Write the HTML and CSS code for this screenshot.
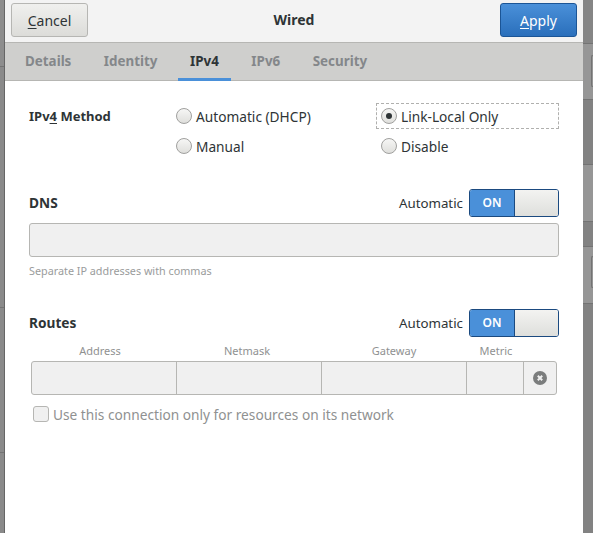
FILE: index.html
```html
<!DOCTYPE html>
<html lang="en">
<head>
    <meta charset="UTF-8">
    <title>Wired</title>
    <link rel="stylesheet" href="styles.css">
</head>
<body>
    <div class="backdrop backdrop-left">
        <div class="band band-l1"></div>
        <div class="band band-l2"></div>
        <div class="band band-l3"></div>
        <div class="band band-l4"></div>
    </div>

    <div class="dialog">
        <div class="header">
            <button type="button" class="btn"><u>C</u>ancel</button>
            <div class="header-title">Wired</div>
            <button type="button" class="btn btn-apply"><u>A</u>pply</button>
        </div>

        <div class="tabs">
            <span class="tab">Details</span>
            <span class="tab">Identity</span>
            <span class="tab tab-active">IPv4</span>
            <span class="tab">IPv6</span>
            <span class="tab">Security</span>
        </div>

        <div class="content">
            <div class="method">
                <div class="section-label method-label">IPv<u>4</u> Method</div>
                <div class="radio-grid">
                    <div class="radio"><span class="radio-dot"></span>Automatic (DHCP)</div>
                    <div class="radio radio-focus"><span class="radio-dot radio-checked"></span>Link-Local Only</div>
                    <div class="radio"><span class="radio-dot"></span>Manual</div>
                    <div class="radio"><span class="radio-dot"></span>Disable</div>
                </div>
            </div>

            <div class="section-head section-dns">
                <div class="section-label">DNS</div>
                <div class="auto">
                    Automatic
                    <div class="switch"><span class="switch-on">ON</span><span class="switch-knob"></span></div>
                </div>
            </div>
            <div class="entry"></div>
            <div class="hint">Separate IP addresses with commas</div>

            <div class="section-head section-routes">
                <div class="section-label">Routes</div>
                <div class="auto">
                    Automatic
                    <div class="switch"><span class="switch-on">ON</span><span class="switch-knob"></span></div>
                </div>
            </div>
            <div class="route-labels">
                <span class="label-address">Address</span>
                <span class="label-netmask">Netmask</span>
                <span class="label-gateway">Gateway</span>
                <span class="label-metric">Metric</span>
            </div>
            <div class="route-row">
                <div class="cell col-wide"></div>
                <div class="cell col-wide"></div>
                <div class="cell col-wide"></div>
                <div class="cell col-metric"></div>
                <div class="cell col-delete">
                    <svg width="14" height="14" viewBox="0 0 14 14">
                        <circle cx="7" cy="7" r="7" fill="#7b7d7d"/>
                        <path d="M4.8 4.8l4.4 4.4M9.2 4.8l-4.4 4.4" stroke="#f0f0f0" stroke-width="2"/>
                    </svg>
                </div>
            </div>
            <div class="check-row"><span class="check"></span>Use this connection only for resources on its network</div>
        </div>
    </div>

    <div class="backdrop backdrop-right">
        <div class="band band-r1"></div>
        <div class="band band-r2"><span class="peek"></span></div>
        <div class="band band-r3"></div>
        <div class="band band-r4"></div>
        <div class="band band-r5"></div>
        <div class="band band-r6"><span class="peek"></span></div>
        <div class="band band-r7"></div>
    </div>
</body>
</html>
```

FILE: styles.css
```css
body {
    margin: 0;
    width: 593px;
    height: 533px;
    overflow: hidden;
    display: flex;
    background-color: #8a8a8a;
    font-family: "Noto Sans", sans-serif;
    font-size: 13.7px;
    color: #2e3436;
}
u {
    text-underline-offset: 2px;
}

/* dimmed window behind the dialog */
.backdrop {
    display: flex;
    flex-direction: column;
}
.backdrop-left {
    width: 4px;
}
.backdrop-right {
    width: 10px;
}
.band {
    box-sizing: border-box;
    border-bottom: 1px solid #737373;
}
.band-l1 { height: 67px; background-color: #8d8d8d; }
.band-l2 { height: 241px; background-color: #8a8a8a; }
.band-l3 { height: 145px; background-color: #8a8a8a; }
.band-l4 { flex: 1; background-color: #8a8a8a; border-bottom: 0; }
.band-r1 { height: 44px; background-color: #858585; }
.band-r2 { height: 56px; background-color: #969696; padding-top: 11px; }
.band-r3 { height: 65px; background-color: #828282; }
.band-r4 { height: 57px; background-color: #969696; }
.band-r5 { height: 25px; background-color: #828282; }
.band-r6 { height: 57px; background-color: #969696; padding-top: 9px; }
.band-r7 { flex: 1; background-color: #828282; border-bottom: 0; }
.peek {
    display: block;
    width: 2px;
    height: 32px;
    margin-left: 8px;
    box-sizing: border-box;
    border: 1px solid #737373;
    border-right: 0;
    border-radius: 3px 0 0 3px;
}

.dialog {
    width: 579px;
    height: 533px;
    flex-shrink: 0;
    box-sizing: border-box;
    border-left: 1px solid #666666;
    background-color: white;
}
.header {
    height: 43px;
    display: flex;
    align-items: flex-start;
    justify-content: space-between;
    padding: 3px 6px 0;
    box-sizing: border-box;
    background-color: #f3f3f3;
    border-bottom: 1px solid #b6b6b3;
}
.header-title {
    font-weight: bold;
    font-size: 14px;
    line-height: 34px;
}
.btn {
    width: 77px;
    height: 34px;
    padding: 0;
    font: inherit;
    font-size: 14px;
    color: #2e3436;
    border: 1px solid #b6b6b3;
    border-radius: 3px;
    background: linear-gradient(#f0f0ee, #dcdcd9);
}
.btn-apply {
    color: white;
    border-color: #1b5596;
    background: linear-gradient(#4a90d9, #2a6fbb);
}
.tabs {
    height: 38px;
    display: flex;
    padding-left: 20px;
    gap: 32.5px;
    box-sizing: border-box;
    background-color: #cfcfcd;
    border-bottom: 1px solid #b6b6b3;
}
.tab {
    line-height: 37px;
    font-size: 13.4px;
    font-weight: bold;
    color: #84878a;
}
.tab-active {
    color: #2e3436;
    padding: 0 12.5px;
    margin: 0 -12.5px;
    height: 38px;
    box-sizing: border-box;
    border-bottom: 3px solid #4a90d9;
}
.content {
    padding: 0 24px;
}
.method {
    display: flex;
    padding-top: 24px;
}
.section-label {
    font-weight: bold;
    line-height: 22px;
}
.method-label {
    width: 149px;
    font-size: 13px;
}
.radio-grid {
    display: grid;
    grid-template-columns: 205px 178px;
    grid-auto-rows: 30px;
    margin-top: -2px;
}
.radio {
    display: flex;
    align-items: center;
    gap: 4px;
    height: 26px;
}
.radio-focus {
    margin-left: -5px;
    padding-left: 5px;
    width: 183px;
    box-sizing: border-box;
    outline: 1px dashed #b0b0ae;
    outline-offset: -1px;
}
.radio-dot {
    width: 16px;
    height: 16px;
    box-sizing: border-box;
    border: 1px solid #a0a09e;
    border-radius: 50%;
    background: linear-gradient(#f6f6f5, #dfdfdc);
    display: flex;
    align-items: center;
    justify-content: center;
}
.radio-checked::after {
    content: "";
    width: 6px;
    height: 6px;
    border-radius: 50%;
    background-color: #2e3436;
}
.section-head {
    display: flex;
    align-items: center;
    justify-content: space-between;
    height: 28px;
}
.section-dns {
    margin-top: 26px;
}
.section-routes {
    margin-top: 30px;
}
.auto {
    display: flex;
    align-items: center;
    gap: 6px;
    font-size: 13.3px;
}
.switch {
    width: 90px;
    height: 28px;
    box-sizing: border-box;
    display: flex;
    border: 1px solid #1b4a80;
    border-radius: 3px;
    overflow: hidden;
}
.switch-on {
    width: 44px;
    background-color: #4a90d9;
    color: white;
    font-size: 12px;
    font-weight: 600;
    line-height: 26px;
    text-align: center;
}
.switch-knob {
    flex: 1;
    border-left: 1px solid #1b4a80;
    background: linear-gradient(#f3f3f1, #dedfdc);
}
.entry {
    margin-top: 6px;
    height: 34px;
    box-sizing: border-box;
    border: 1px solid #b6b6b3;
    border-radius: 3px;
    background-color: #f0f0f0;
}
.hint {
    margin-top: 6px;
    font-size: 10.8px;
    line-height: 16px;
    color: #9a9c9c;
}
.route-labels {
    display: flex;
    margin: 6px 2px 0;
    font-size: 11px;
    line-height: 16px;
    color: #8f9191;
    text-align: center;
}
.label-address { width: 138px; }
.label-netmask { width: 156px; }
.label-gateway { width: 138px; }
.label-metric { width: 66px; }
.col-wide {
    width: 145px;
}
.col-metric {
    width: 57px;
}
.route-row {
    display: flex;
    margin: 2px 2px 0;
    height: 34px;
    box-sizing: border-box;
    border: 1px solid #b6b6b3;
    border-radius: 3px;
    background-color: #f0f0f0;
}
.cell {
    box-sizing: border-box;
    border-right: 1px solid #b6b6b3;
}
.col-delete {
    flex: 1;
    border-right: 0;
    display: flex;
    align-items: center;
    justify-content: center;
}
.check-row {
    display: flex;
    align-items: center;
    gap: 4px;
    margin: 11px 0 0 4px;
    height: 16px;
    color: #8f9191;
}
.check {
    width: 16px;
    height: 16px;
    box-sizing: border-box;
    border: 1px solid #b6b6b3;
    border-radius: 3px;
    background-color: #f0f0f0;
}
```
